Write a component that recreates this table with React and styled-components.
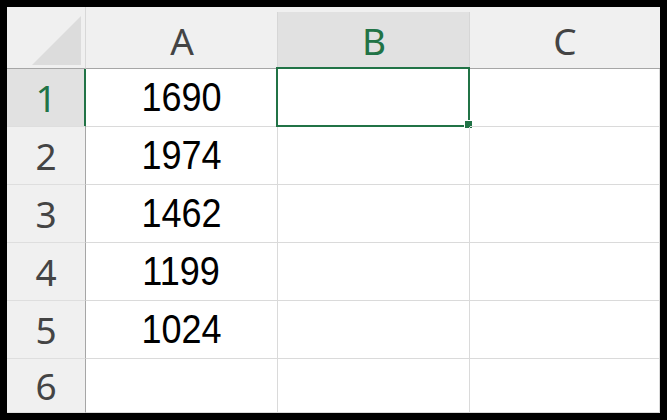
import React from "react";
import styled, { createGlobalStyle } from "styled-components";

const GlobalStyle = createGlobalStyle`
  html, body {
    margin: 0;
    padding: 0;
    background: #000;
  }
  * {
    box-sizing: border-box;
  }
`;

const Frame = styled.div`
  width: 667px;
  height: 420px;
  border: 7px solid #000;
  background: #fff;
  overflow: hidden;
`;

const Sheet = styled.div`
  display: grid;
  grid-template-columns: 79px 192px 192px 1fr;
  grid-template-rows: 62px repeat(5, 58px) 1fr;
  height: 100%;
`;

const Corner = styled.div`
  position: relative;
  background: #f0f0f0;
  border-right: 1px solid #d8d8d8;
  border-bottom: 1px solid #a6a6a6;
  display: flex;
  align-items: flex-end;
  justify-content: flex-end;
  padding: 0 3px 2px 0;
`;

const ColHeader = styled.div`
  position: relative;
  background: ${(p) =>
    p.$active ? "linear-gradient(#f0f0f0 5px, #e1e1e1 5px)" : "#f0f0f0"};
  border-bottom: 1px solid #a6a6a6;
  color: ${(p) => (p.$active ? "#217346" : "#444")};
  font-family: "Noto Sans", "Open Sans", sans-serif;
  font-size: 37px;
  display: flex;
  align-items: center;
  justify-content: center;
  padding-top: 5px;
  &::after {
    content: "";
    position: absolute;
    right: 0;
    top: 5px;
    bottom: 0;
    width: 1px;
    background: ${(p) => (p.$last ? "transparent" : "#d6d6d6")};
  }
`;

const RowHeader = styled.div`
  background: ${(p) => (p.$active ? "#e1e1e1" : "#f0f0f0")};
  border-right: 1px solid ${(p) => (p.$active ? "#217346" : "#a6a6a6")};
  border-bottom: 1px solid #dedede;
  box-shadow: ${(p) => (p.$active ? "inset -1px 0 0 #217346" : "none")};
  color: ${(p) => (p.$active ? "#217346" : "#444")};
  font-family: "Noto Sans", "Open Sans", sans-serif;
  font-size: 37px;
  display: flex;
  align-items: center;
  justify-content: center;
`;

const Cell = styled.div`
  position: relative;
  border-right: 1px solid #dadada;
  border-bottom: 1px solid #dadada;
  display: flex;
  align-items: center;
  justify-content: center;
`;

const Value = styled.span`
  font-family: "Liberation Sans", Arial, sans-serif;
  font-size: 40px;
  color: #000;
  transform: scaleX(0.9);
`;

const Selection = styled.div`
  position: absolute;
  top: -2px;
  left: -2px;
  right: -1px;
  bottom: -1px;
  border: 2px solid #217346;
  pointer-events: none;
`;

const FillHandle = styled.div`
  position: absolute;
  right: -4px;
  bottom: -3px;
  width: 7px;
  height: 7px;
  background: #217346;
  outline: 1px solid #fff;
`;

const columns = ["A", "B", "C"];
const values = ["1690", "1974", "1462", "1199", "1024", ""];

const App = () => {
  return (
    <>
      <GlobalStyle />
      <Frame>
        <Sheet>
          <Corner>
            <svg width="50" height="50" viewBox="0 0 50 50">
              <polygon points="49,0 49,49 0,49" fill="#dcdcdc" />
            </svg>
          </Corner>
          {columns.map((c, i) => (
            <ColHeader key={c} $active={c === "B"} $last={i === columns.length - 1}>
              {c}
            </ColHeader>
          ))}
          {values.map((v, r) => (
            <React.Fragment key={r}>
              <RowHeader $active={r === 0}>{r + 1}</RowHeader>
              <Cell>{v && <Value>{v}</Value>}</Cell>
              <Cell>
                {r === 0 && (
                  <Selection>
                    <FillHandle />
                  </Selection>
                )}
              </Cell>
              <Cell />
            </React.Fragment>
          ))}
        </Sheet>
      </Frame>
    </>
  );
};

export default App;
